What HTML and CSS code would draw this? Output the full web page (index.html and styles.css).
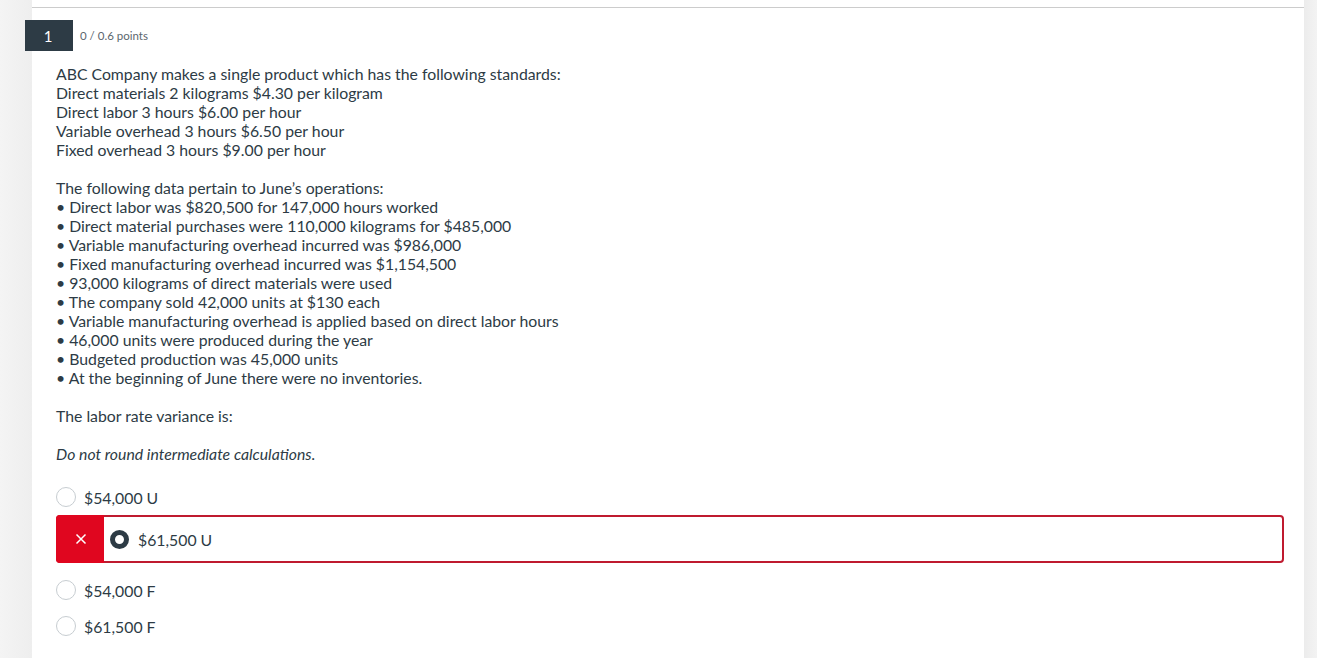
FILE: index.html
```html
<!DOCTYPE html>
<html>
<head>
<meta charset="utf-8">
<link rel="stylesheet" href="styles.css">
</head>
<body>
<div class="page">
  <div class="gutter"></div>
  <main class="card">
    <div class="topline"></div>
    <div class="qhead">
      <div class="qnum">1</div>
      <div class="points">0 / 0.6 points</div>
    </div>
    <div class="qtext">
      <p>ABC Company makes a single product which has the following standards:<br>
      Direct materials 2 kilograms $4.30 per kilogram<br>
      Direct labor 3 hours $6.00 per hour<br>
      Variable overhead 3 hours $6.50 per hour<br>
      Fixed overhead 3 hours $9.00 per hour</p>
      <p>The following data pertain to June’s operations:<br>
      • Direct labor was $820,500 for 147,000 hours worked<br>
      • Direct material purchases were 110,000 kilograms for $485,000<br>
      • Variable manufacturing overhead incurred was $986,000<br>
      • Fixed manufacturing overhead incurred was $1,154,500<br>
      • 93,000 kilograms of direct materials were used<br>
      • The company sold 42,000 units at $130 each<br>
      • Variable manufacturing overhead is applied based on direct labor hours<br>
      • 46,000 units were produced during the year<br>
      • Budgeted production was 45,000 units<br>
      • At the beginning of June there were no inventories.</p>
      <p>The labor rate variance is:</p>
      <p><em>Do not round intermediate calculations.</em></p>
    </div>
    <div class="options">
      <div class="opt"><span class="radio"></span><span>$54,000 U</span></div>
      <div class="opt wrong">
        <span class="mark"><svg width="12" height="12" viewBox="0 0 12 12"><path d="M1.5 1.5 L10.5 10.5 M10.5 1.5 L1.5 10.5" stroke="#fff" stroke-width="1.5" fill="none"/></svg></span>
        <span class="radio checked"></span><span>$61,500 U</span>
      </div>
      <div class="opt"><span class="radio"></span><span>$54,000 F</span></div>
      <div class="opt"><span class="radio"></span><span>$61,500 F</span></div>
    </div>
  </main>
  <div class="rgutter"></div>
</div>
</body>
</html>
```
FILE: styles.css
```css
html, body {
  margin: 0;
  padding: 0;
  height: 100%;
}
body {
  background: #f1f1f1;
  font-family: Lato, "Open Sans", sans-serif;
  color: #2d3b45;
  overflow: hidden;
}
.page {
  display: flex;
  height: 658px;
}
.gutter {
  width: 32px;
  flex: none;
  background: linear-gradient(to right, #f4f4f4, #eeeeee);
}
.rgutter {
  width: 13px;
  flex: none;
  background: linear-gradient(to right, #ececec, #f3f3f3);
}
.card {
  flex: 1;
  background: #fff;
  padding-top: 7px;
}
.topline {
  height: 1px;
  background: #cccccc;
}
.qhead {
  display: flex;
  align-items: center;
  margin-top: 12px;
  margin-left: -7px;
}
.qnum {
  width: 48px;
  height: 31px;
  background: #2d3b45;
  color: #fff;
  font-size: 15px;
  display: flex;
  align-items: center;
  justify-content: center;
  padding-right: 2px;
  box-sizing: border-box;
}
.points {
  margin-left: 7px;
  font-size: 11.5px;
  color: #5b666e;
}
.qtext {
  padding-left: 24px;
  margin-top: 13px;
  font-size: 15.8px;
  line-height: 19px;
}
.qtext p {
  margin: 0 0 19px 0;
}
.qtext p:last-child {
  margin-bottom: 16px;
}
.qtext em {
  font-style: italic;
}
.options {
  margin-left: 24px;
  margin-right: 20px;
  font-size: 15.8px;
}
.opt {
  display: flex;
  align-items: center;
  height: 36px;
  gap: 8px;
}
.radio {
  width: 20px;
  height: 20px;
  border: 1px solid #c7cdd1;
  border-radius: 50%;
  box-sizing: border-box;
  flex: none;
  background: #fff;
}
.radio.checked {
  border: 5px solid #2d3b45;
  width: 19px;
  height: 19px;
}
.opt.wrong {
  height: 48px;
  box-sizing: border-box;
  border: 2px solid #bf1a2f;
  border-radius: 4px;
  margin: 0 0 9px 0;
  gap: 0;
}
.opt.wrong .mark {
  width: 46px;
  margin-left: -2px;
  padding-left: 2px;
  background: #e0061f;
  display: flex;
  align-items: center;
  justify-content: center;
  align-self: stretch;
  margin-top: -2px;
  margin-bottom: -2px;
  border-radius: 4px 0 0 4px;
  flex: none;
}
.opt.wrong .radio {
  margin-left: 6px;
  margin-right: 9px;
}
```
